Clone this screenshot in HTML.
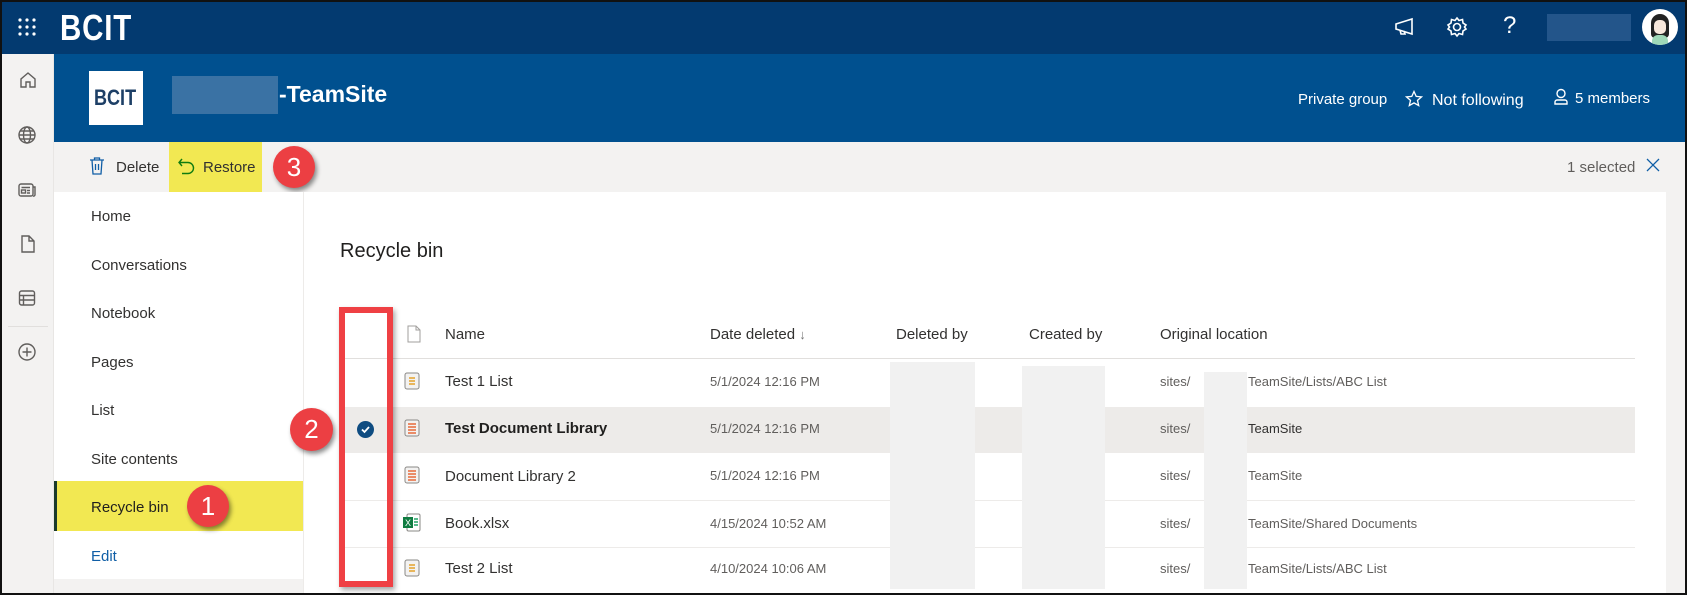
<!DOCTYPE html>
<html><head><meta charset="utf-8">
<style>
*{box-sizing:border-box;margin:0;padding:0}
body{width:1687px;height:595px;overflow:hidden;background:#f3f2f1;font-family:"Liberation Sans",sans-serif;color:#323130;position:relative}
.a{position:absolute}
.t{position:absolute;white-space:nowrap;font-size:14px;line-height:1}
.circ{position:absolute;border-radius:50%;background:#ec3f43;color:#fff;font-size:26px;text-align:center;box-shadow:2px 3px 5px rgba(0,0,0,.45)}
.blur{position:absolute;background:#f1f1f1}
.rowline{position:absolute;left:345px;width:1290px;height:1px;background:#edebe9}
.ic{position:absolute}
</style></head><body>
<div class="a" style="left:0;top:0;width:1687px;height:54px;background:#033a70"></div>
<svg class="ic" style="left:17px;top:17px" width="20" height="20" viewBox="0 0 20 20" fill="#fff"><circle cx="3" cy="3" r="1.6"/><circle cx="10" cy="3" r="1.6"/><circle cx="17" cy="3" r="1.6"/><circle cx="3" cy="10" r="1.6"/><circle cx="10" cy="10" r="1.6"/><circle cx="17" cy="10" r="1.6"/><circle cx="3" cy="17" r="1.6"/><circle cx="10" cy="17" r="1.6"/><circle cx="17" cy="17" r="1.6"/></svg>
<div class="t" style="left:60px;top:10px;font-size:36px;font-weight:bold;color:#fff;transform:scaleX(.82);transform-origin:left;letter-spacing:1px">BCIT</div>
<svg class="ic" style="left:1393px;top:16px" width="24" height="22" viewBox="0 0 24 22" fill="none" stroke="#fff" stroke-width="1.6"><path d="M3 8 L19 3 L19 18 L3 13 Z"/><path d="M7 14 L8 18 L12 18 L11 15"/></svg>
<svg class="ic" style="left:1446px;top:16px" width="22" height="22" viewBox="0 0 22 22" fill="none" stroke="#fff" stroke-width="1.6"><circle cx="11" cy="11" r="3.5"/><path d="M11 2 L13 4.5 L16.5 3.5 L17 7 L20 9 L18.5 11 L20 13 L17 15 L16.5 18.5 L13 17.5 L11 20 L9 17.5 L5.5 18.5 L5 15 L2 13 L3.5 11 L2 9 L5 7 L5.5 3.5 L9 4.5 Z"/></svg>
<div class="t" style="left:1503px;top:14px;font-size:24px;color:#fff">?</div>
<div class="a" style="left:1547px;top:14px;width:84px;height:27px;background:#23558a"></div>
<div class="a" style="left:1642px;top:9px;width:36px;height:36px;border-radius:50%;background:#fff;overflow:hidden">
<div class="a" style="left:9px;top:5px;width:18px;height:24px;border-radius:9px 9px 4px 4px;background:#222"></div>
<div class="a" style="left:12px;top:11px;width:12px;height:14px;border-radius:5px;background:#f8e8dc"></div>
<div class="a" style="left:10px;top:26px;width:16px;height:12px;border-radius:6px 6px 0 0;background:#9fd8b8"></div></div>
<div class="a" style="left:0;top:54px;width:54px;height:541px;background:#f3f2f1;border-right:1px solid #e8e6e4"></div>
<svg class="ic" style="left:18px;top:70px" width="20" height="20" viewBox="0 0 20 20" fill="none" stroke="#605e5c" stroke-width="1.4"><path d="M3 17 V9 L10 3 L17 9 V17 H12 V12 H8 V17 Z"/></svg>
<svg class="ic" style="left:17px;top:125px" width="20" height="20" viewBox="0 0 20 20" fill="none" stroke="#605e5c" stroke-width="1.4"><circle cx="10" cy="10" r="8"/><ellipse cx="10" cy="10" rx="3.5" ry="8"/><path d="M2 10 H18 M3.5 6 H16.5 M3.5 14 H16.5"/></svg>
<svg class="ic" style="left:17px;top:180px" width="20" height="20" viewBox="0 0 20 20" fill="none" stroke="#605e5c" stroke-width="1.4"><rect x="2" y="4" width="14" height="12" rx="2"/><path d="M16 7 H18 V15 A1.5 1.5 0 0 1 16 16"/><rect x="4.5" y="10" width="4" height="3"/><path d="M4.5 7.5 H13 M10 10.5 H13 M10 13 H13"/></svg>
<svg class="ic" style="left:18px;top:234px" width="20" height="20" viewBox="0 0 20 20" fill="none" stroke="#605e5c" stroke-width="1.4"><path d="M4 2 H11 L16 7 V18 H4 Z M11 2 V7 H16"/></svg>
<svg class="ic" style="left:17px;top:288px" width="20" height="20" viewBox="0 0 20 20" fill="none" stroke="#605e5c" stroke-width="1.4"><rect x="2.5" y="3" width="15" height="14" rx="2"/><path d="M2.5 7.5 H17.5 M2.5 12 H17.5 M6.5 7.5 V17"/></svg>
<div class="a" style="left:8px;top:326px;width:40px;height:1px;background:#e1dfdd"></div>
<svg class="ic" style="left:17px;top:342px" width="20" height="20" viewBox="0 0 20 20" fill="none" stroke="#605e5c" stroke-width="1.4"><circle cx="10" cy="10" r="8"/><path d="M10 5.5 V14.5 M5.5 10 H14.5"/></svg>
<div class="a" style="left:54px;top:54px;width:1633px;height:88px;background:#00508f"></div>
<div class="a" style="left:89px;top:71px;width:54px;height:54px;background:#fff"></div>
<div class="t" style="left:94px;top:87px;font-size:22px;font-weight:bold;color:#1d3f66;transform:scaleX(.82);transform-origin:left">BCIT</div>
<div class="a" style="left:172px;top:76px;width:106px;height:38px;background:#3a72a4"></div>
<div class="t" style="left:279px;top:83px;font-size:23px;font-weight:bold;color:#fff">-TeamSite</div>
<div class="t" style="left:1298px;top:92px;font-size:15px;color:#fff">Private group</div>
<svg class="ic" style="left:1405px;top:90px" width="18" height="18" viewBox="0 0 18 18" fill="none" stroke="#fff" stroke-width="1.3"><path d="M9 1.5 L11.2 6.4 L16.5 6.9 L12.5 10.4 L13.7 15.6 L9 12.9 L4.3 15.6 L5.5 10.4 L1.5 6.9 L6.8 6.4 Z"/></svg>
<div class="t" style="left:1432px;top:93px;font-size:16px;color:#fff">Not following</div>
<svg class="ic" style="left:1553px;top:88px" width="16" height="18" viewBox="0 0 16 18" fill="none" stroke="#fff" stroke-width="1.4"><circle cx="8" cy="5.5" r="4"/><path d="M2 16 H14 V14 A2 2 0 0 0 12 12 H4 A2 2 0 0 0 2 14 Z"/></svg>
<div class="t" style="left:1575px;top:91px;font-size:15px;color:#fff">5 members</div>
<div class="a" style="left:54px;top:142px;width:1633px;height:50px;background:#f3f2f1"></div>
<svg class="ic" style="left:89px;top:156px" width="16" height="20" viewBox="0 0 16 20" fill="none" stroke="#0f5ea6" stroke-width="1.3"><path d="M1 4 H15 M5.5 4 V2 H10.5 V4 M3 4 L4 18 H12 L13 4 M6.5 8 V14 M9.5 8 V14"/></svg>
<div class="t" style="left:116px;top:160px;font-size:15px">Delete</div>
<div class="a" style="left:169px;top:142px;width:93px;height:50px;background:#f2e852"></div>
<svg class="ic" style="left:177px;top:157px" width="18" height="18" viewBox="0 0 18 18" fill="none" stroke="#107c10" stroke-width="1.4"><path d="M5 2 L2 5.5 L5 9 M2 5.5 H11 A5.5 5.5 0 0 1 11 16.5 H5"/></svg>
<div class="t" style="left:203px;top:160px;font-size:15px">Restore</div>
<div class="circ" style="left:273px;top:146px;width:42px;height:42px;line-height:42px">3</div>
<div class="t" style="left:1567px;top:160px;font-size:15px;color:#605e5c">1 selected</div>
<svg class="ic" style="left:1646px;top:158px" width="14" height="14" viewBox="0 0 14 14" stroke="#0f5ea6" stroke-width="1.3"><path d="M1 1 L13 13 M13 1 L1 13"/></svg>
<div class="a" style="left:54px;top:192px;width:249px;height:387px;background:#fff"></div>
<div class="a" style="left:54px;top:481px;width:249px;height:50px;background:#f2e852"></div>
<div class="a" style="left:54px;top:481px;width:3px;height:50px;background:#1b3b2c"></div>
<div class="t" style="left:91px;top:209px;font-size:15px">Home</div>
<div class="t" style="left:91px;top:258px;font-size:15px">Conversations</div>
<div class="t" style="left:91px;top:306px;font-size:15px">Notebook</div>
<div class="t" style="left:91px;top:355px;font-size:15px">Pages</div>
<div class="t" style="left:91px;top:403px;font-size:15px">List</div>
<div class="t" style="left:91px;top:452px;font-size:15px">Site contents</div>
<div class="t" style="left:91px;top:500px;font-size:15px;color:#201f1e">Recycle bin</div>
<div class="t" style="left:91px;top:549px;font-size:15px;color:#0f5ea6">Edit</div>
<div class="circ" style="left:187px;top:485px;width:42px;height:42px;line-height:42px">1</div>
<div class="a" style="left:303px;top:192px;width:1363px;height:403px;background:#fff;border-left:1px solid #edebe9"></div>
<div class="a" style="left:1666px;top:192px;width:21px;height:403px;background:#f3f2f1"></div>
<div class="t" style="left:340px;top:241px;font-size:20px;color:#201f1e">Recycle bin</div>
<div class="rowline" style="top:358px;background:#e1dfdd"></div>
<div class="a" style="left:345px;top:407px;width:1290px;height:46px;background:#edebe9"></div>
<div class="rowline" style="top:500px"></div>
<div class="rowline" style="top:547px"></div>
<svg class="ic" style="left:407px;top:325px" width="14" height="18" viewBox="0 0 14 18" fill="none" stroke="#a19f9d" stroke-width="1"><path d="M1 1 H9 L13 5 V17 H1 Z M9 1 V5 H13"/></svg>
<div class="t" style="left:445px;top:327px;font-size:15px;color:#323130">Name</div>
<div class="t" style="left:710px;top:327px;font-size:15px">Date deleted <span style="color:#777;font-size:13px">&#8595;</span></div>
<div class="t" style="left:896px;top:327px;font-size:15px">Deleted by</div>
<div class="t" style="left:1029px;top:327px;font-size:15px">Created by</div>
<div class="t" style="left:1160px;top:327px;font-size:15px">Original location</div>
<div class="blur" style="left:890px;top:362px;width:85px;height:227px"></div>
<div class="blur" style="left:1022px;top:366px;width:83px;height:223px"></div>
<div class="blur" style="left:1204px;top:372px;width:43px;height:217px"></div>
<svg class="ic" style="left:404px;top:372px" width="16" height="18" viewBox="0 0 16 18"><rect x="1" y="1" width="14" height="16" rx="2" fill="#f3f2f1" stroke="#8a8886"/><path d="M5 6 H11 M5 9 H11 M5 12 H11" stroke="#e5a12a" stroke-width="1.5"/></svg>
<div class="t" style="left:445px;top:374px;font-size:15px">Test 1 List</div>
<div class="t" style="left:710px;top:375px;font-size:13px;color:#605e5c">5/1/2024 12:16 PM</div>
<div class="t" style="left:1160px;top:375px;font-size:13px;color:#605e5c">sites/</div>
<div class="t" style="left:1248px;top:375px;font-size:13px;color:#605e5c">TeamSite/Lists/ABC List</div>
<div class="circ" style="left:290px;top:408px;width:43px;height:43px;line-height:43px">2</div>
<div class="a" style="left:357px;top:421px;width:17px;height:17px;border-radius:50%;background:#0f4c81"></div>
<svg class="ic" style="left:360px;top:424px" width="11" height="11" viewBox="0 0 11 11" fill="none" stroke="#fff" stroke-width="1.8"><path d="M2 5.5 L4.5 8 L9 3"/></svg>
<svg class="ic" style="left:404px;top:419px" width="16" height="18" viewBox="0 0 16 18"><rect x="1" y="1" width="14" height="16" rx="2" fill="#f3f2f1" stroke="#8a8886"/><path d="M4 5 H12 M4 8 H12 M4 11 H12 M4 14 H12" stroke="#e86a3a" stroke-width="1.6"/></svg>
<div class="t" style="left:445px;top:421px;font-size:15px;color:#201f1e;font-weight:bold">Test Document Library</div>
<div class="t" style="left:710px;top:422px;font-size:13px;color:#605e5c">5/1/2024 12:16 PM</div>
<div class="t" style="left:1160px;top:422px;font-size:13px;color:#605e5c">sites/</div>
<div class="t" style="left:1248px;top:422px;font-size:13px;color:#323130">TeamSite</div>
<svg class="ic" style="left:404px;top:466px" width="16" height="18" viewBox="0 0 16 18"><rect x="1" y="1" width="14" height="16" rx="2" fill="#f3f2f1" stroke="#8a8886"/><path d="M4 5 H12 M4 8 H12 M4 11 H12 M4 14 H12" stroke="#e86a3a" stroke-width="1.6"/></svg>
<div class="t" style="left:445px;top:469px;font-size:15px">Document Library 2</div>
<div class="t" style="left:710px;top:469px;font-size:13px;color:#605e5c">5/1/2024 12:16 PM</div>
<div class="t" style="left:1160px;top:469px;font-size:13px;color:#605e5c">sites/</div>
<div class="t" style="left:1248px;top:469px;font-size:13px;color:#605e5c">TeamSite</div>
<svg class="ic" style="left:402px;top:513px" width="19" height="19" viewBox="0 0 19 19"><rect x="5" y="1" width="13" height="17" rx="1.5" fill="#fff" stroke="#8a8886"/><path d="M12 6 H16 M12 9 H16 M12 12 H16" stroke="#21a366" stroke-width="1.4"/><rect x="1" y="4" width="10" height="11" fill="#107c41"/><text x="3" y="13" font-size="9" fill="#fff" font-family="Liberation Sans">X</text></svg>
<div class="t" style="left:445px;top:516px;font-size:15px">Book.xlsx</div>
<div class="t" style="left:710px;top:517px;font-size:13px;color:#605e5c">4/15/2024 10:52 AM</div>
<div class="t" style="left:1160px;top:517px;font-size:13px;color:#605e5c">sites/</div>
<div class="t" style="left:1248px;top:517px;font-size:13px;color:#605e5c">TeamSite/Shared Documents</div>
<svg class="ic" style="left:404px;top:559px" width="16" height="18" viewBox="0 0 16 18"><rect x="1" y="1" width="14" height="16" rx="2" fill="#f3f2f1" stroke="#8a8886"/><path d="M5 6 H11 M5 9 H11 M5 12 H11" stroke="#e5a12a" stroke-width="1.5"/></svg>
<div class="t" style="left:445px;top:561px;font-size:15px">Test 2 List</div>
<div class="t" style="left:710px;top:562px;font-size:13px;color:#605e5c">4/10/2024 10:06 AM</div>
<div class="t" style="left:1160px;top:562px;font-size:13px;color:#605e5c">sites/</div>
<div class="t" style="left:1248px;top:562px;font-size:13px;color:#605e5c">TeamSite/Lists/ABC List</div>
<div class="a" style="left:339px;top:307px;width:54px;height:280px;border:6px solid #ef4044;box-shadow:2px 3px 5px rgba(0,0,0,.35)"></div>
<div class="a" style="left:0;top:0;width:1687px;height:595px;border:2px solid #111;pointer-events:none"></div>
</body></html>
